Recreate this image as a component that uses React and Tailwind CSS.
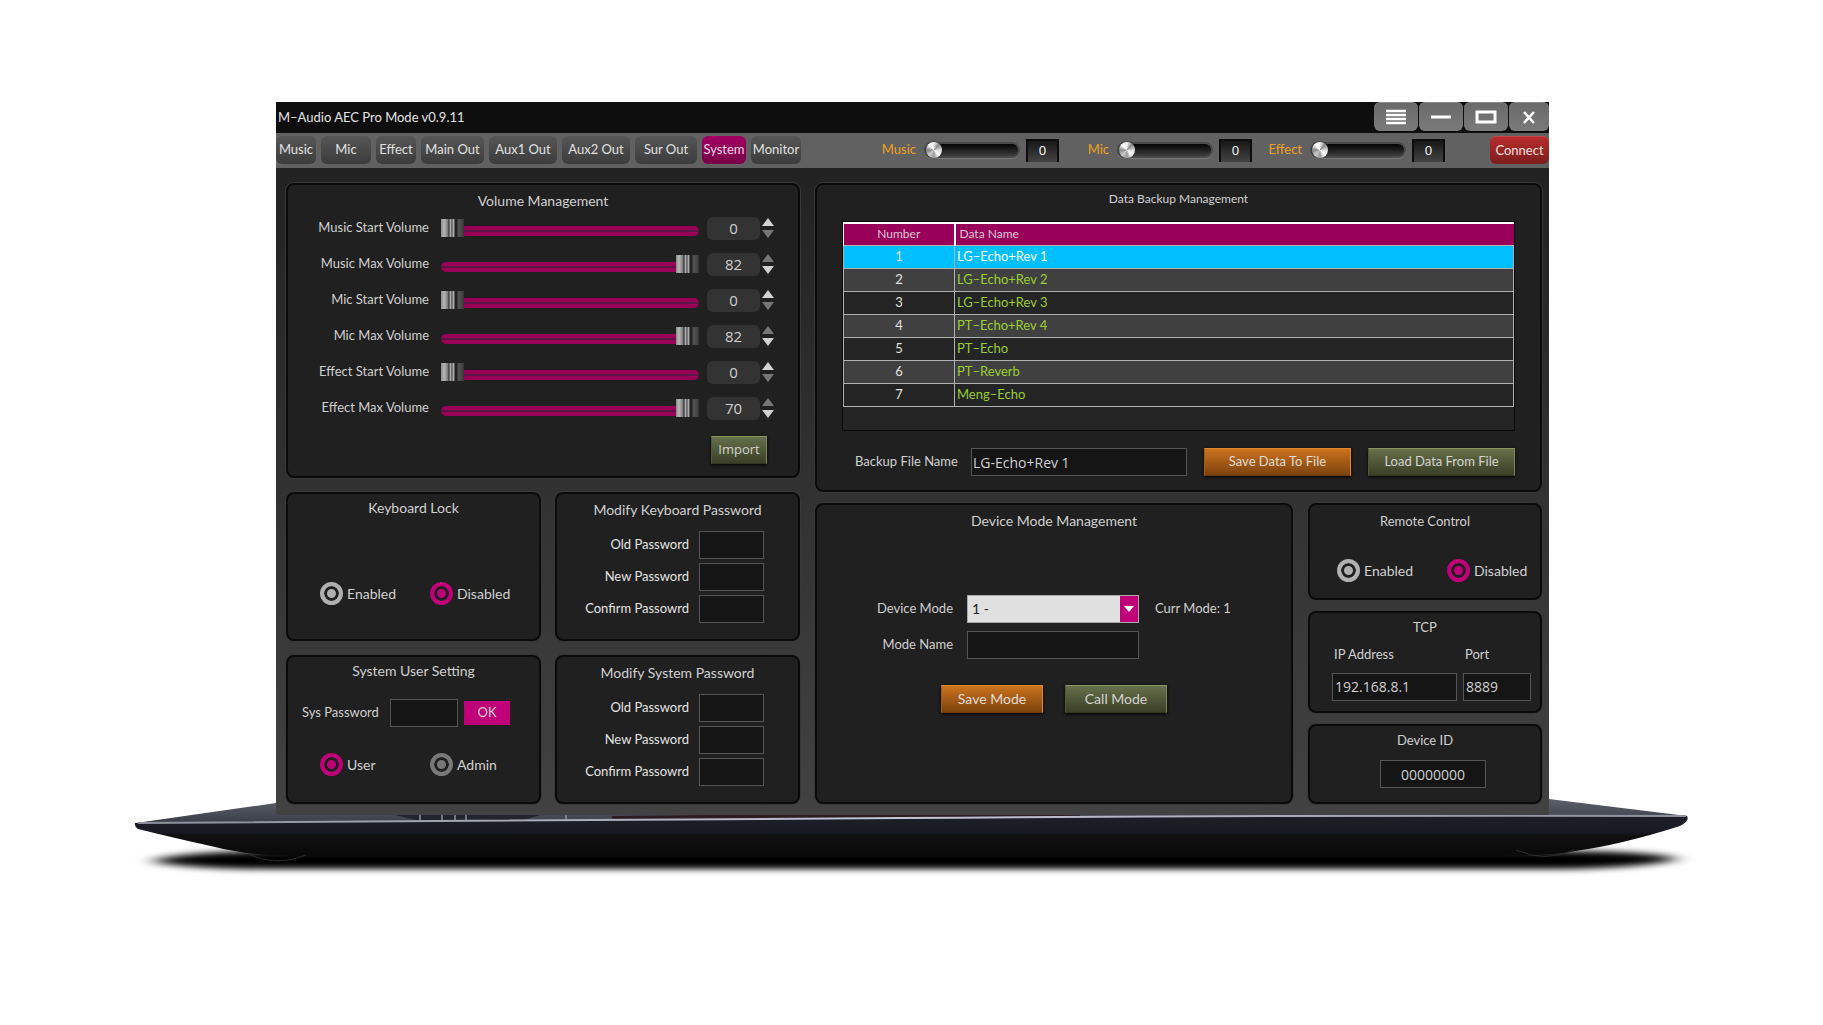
import React from "react";

const panelBase = "rounded-lg border-2 border-[#0a0a0a] bg-[#202020] text-[#d0d0d0] shadow-[0_0_0_1px_#383838]";

function Panel({ title, className = "", titleClass = "text-sm leading-5", children }) {
  return (
    <section className={panelBase + " flex flex-col " + className}>
      <h2 className={"text-center " + titleClass}>{title}</h2>
      {children}
    </section>
  );
}

const tabs = [
  ["Music", "w-10"],
  ["Mic", "w-[50px]"],
  ["Effect", "w-10"],
  ["Main Out", "w-[63px]"],
  ["Aux1 Out", "w-[68px]"],
  ["Aux2 Out", "w-[68px]"],
  ["Sur Out", "w-[62px]"],
  ["System", "w-11"],
  ["Monitor", "w-[50px]"],
];

function TopSlider({ label }) {
  const id = "top-" + label.toLowerCase();
  return (
    <div className="flex w-[193px] items-center">
      <label htmlFor={id} className="flex-1 text-right text-[13px] text-[#f0a020]">
        {label}
      </label>
      <input
        id={id}
        type="range"
        min="0"
        max="82"
        defaultValue="0"
        className="ml-2 h-4 w-24 appearance-none rounded-full border-2 border-[#4a4a4a] bg-linear-to-b from-[#050505] to-[#3e3e3e] shadow-[0_1px_0_#7a7a7a] [&::-webkit-slider-thumb]:size-4 [&::-webkit-slider-thumb]:appearance-none [&::-webkit-slider-thumb]:rounded-full [&::-webkit-slider-thumb]:bg-[conic-gradient(#eee,#888_12%,#ddd_25%,#fff_38%,#999_50%,#ccc_62%,#888_75%,#fff_88%,#eee)] [&::-webkit-slider-thumb]:shadow-[0_0_2px_#222]"
      />
      <output htmlFor={id} className="ml-1.5 flex h-[23px] w-[33px] items-center justify-center border-x-2 border-t-2 border-[#0c0c0c] bg-linear-to-b from-[#181818] to-[#444] font-['Open_Sans',sans-serif] text-[13px] text-white">
        0
      </output>
    </div>
  );
}

function WindowButton({ label, width = "w-11", children }) {
  return (
    <button aria-label={label} className={"flex h-[29px] items-center justify-center rounded-md border-t border-[#8a8a8a] bg-linear-to-b from-[#6a6a6a] to-[#7a7a7a] text-white " + width}>
      <svg viewBox="0 0 22 16" className="h-4 w-[22px]" fill="none" stroke="currentColor">
        {children}
      </svg>
    </button>
  );
}

const volumes = [
  ["Music Start Volume", 0, 82],
  ["Music Max Volume", 82, 82],
  ["Mic Start Volume", 0, 82],
  ["Mic Max Volume", 82, 82],
  ["Effect Start Volume", 0, 70],
  ["Effect Max Volume", 70, 70],
];

function VolumeRow({ label, value, max }) {
  const id = label.toLowerCase().replaceAll(" ", "-");
  const atMin = value === 0;
  return (
    <div className="flex h-9 items-center">
      <label htmlFor={id} className="w-[141px] text-right text-[13px]">
        {label}
      </label>
      <input
        id={id}
        type="range"
        min="0"
        max={max}
        defaultValue={value}
        className="ml-3 h-5 min-w-0 flex-1 appearance-none bg-transparent [&::-webkit-slider-runnable-track]:mt-1.5 [&::-webkit-slider-runnable-track]:h-2.5 [&::-webkit-slider-runnable-track]:rounded-full [&::-webkit-slider-runnable-track]:bg-[linear-gradient(#9b0058_4px,#5c1448_4px,#5c1448_6px,#9b0058_6px)] [&::-webkit-slider-thumb]:mt-[-7px] [&::-webkit-slider-thumb]:h-[18px] [&::-webkit-slider-thumb]:w-[23px] [&::-webkit-slider-thumb]:appearance-none [&::-webkit-slider-thumb]:bg-[linear-gradient(90deg,#8a8a8a,#b8b8b8_3px,#777_7px,#222_8px,#aaa_9px,#aaa_10px,#333_11px,#bbb_12px,#999_13px,#222_14px,#222_16px,#555_17px,#444_21px,#333)]"
      />
      <output htmlFor={id} className="ml-2 flex h-[23px] w-[53px] items-center justify-center rounded-md bg-[#333] font-['Open_Sans',sans-serif] text-[15px]">
        {value}
      </output>
      <div className="mr-6 ml-0.5 flex flex-col gap-1">
        <button aria-label={"Increase " + label} className={atMin ? "text-[#d0d0d0]" : "text-[#777]"}>
          <svg viewBox="0 0 12 8" className="h-2 w-3" fill="currentColor"><path d="M6 0 12 8H0Z" /></svg>
        </button>
        <button aria-label={"Decrease " + label} className={atMin ? "text-[#777]" : "text-[#d0d0d0]"}>
          <svg viewBox="0 0 12 8" className="h-2 w-3" fill="currentColor"><path d="M0 0H12L6 8Z" /></svg>
        </button>
      </div>
    </div>
  );
}

function Radio({ name, label, checked, tone = "border-[#b0b0b0] bg-[#b0b0b0]" }) {
  return (
    <label className="flex items-center gap-1 text-sm">
      <input
        type="radio"
        name={name}
        defaultChecked={checked}
        className={
          "size-[23px] appearance-none rounded-full border-4 shadow-[inset_0_0_0_3px_#202020] " +
          (checked ? "border-[#c00078] bg-[#c00078]" : tone)
        }
      />
      {label}
    </label>
  );
}

const field = "h-7 min-w-0 border border-[#555] bg-[#151515] font-['Open_Sans',sans-serif] text-sm text-[#d0d0d0]";

function PasswordPanel({ title, prefix }) {
  return (
    <Panel title={title} className="h-[149px]" titleClass="mt-1.5 text-sm leading-5">
      <div className="mt-[11px] mr-[34px] flex flex-col gap-1">
        {["Old Password", "New Password", "Confirm Passowrd"].map((label, i) => (
          <div key={label} className="flex items-center justify-end gap-2.5 text-[13px] text-[#e4e4e4]">
            <label htmlFor={prefix + i}>{label}</label>
            <input id={prefix + i} type="password" className={field + " w-[65px]"} />
          </div>
        ))}
      </div>
    </Panel>
  );
}

const orange = "border border-t-[#e08a2c] border-r-[#e08a2c] border-b-[#6b3a08] border-l-[#a85c14] bg-linear-to-b from-[#cd731e] to-[#7c430d] text-[#e0dcd4] shadow-[0_1px_3px_#000]";
const olive = "border border-t-[#8a9660] border-r-[#808a5c] border-b-[#33361f] border-l-[#50583a] bg-linear-to-b from-[#66704a] to-[#3b3f27] text-[#d4d4d0] shadow-[0_1px_3px_#000]";

const backups = ["LG–Echo+Rev 1", "LG–Echo+Rev 2", "LG–Echo+Rev 3", "PT–Echo+Rev 4", "PT–Echo", "PT–Reverb", "Meng–Echo"];

function rowTone(i) {
  if (i === 0) return "bg-[#00bfff] text-white";
  return i % 2 ? "bg-[#404040] text-[#9acd32]" : "bg-[#242424] text-[#9acd32]";
}

function LaptopBase() {
  return (
    <svg viewBox="0 0 1823 80" className="-mt-4 block w-full" aria-hidden="true">
      <defs>
        <linearGradient id="deck" x1="0" y1="0" x2="0" y2="1">
          <stop offset="0" stopColor="#5c606b" />
          <stop offset="1" stopColor="#3a3e48" />
        </linearGradient>
        <linearGradient id="front" x1="0" y1="0" x2="0" y2="1">
          <stop offset="0" stopColor="#1c1f29" />
          <stop offset="0.4" stopColor="#191b24" />
          <stop offset="0.5" stopColor="#101010" />
          <stop offset="1" stopColor="#090909" />
        </linearGradient>
        <linearGradient id="lip" x1="0" y1="0" x2="1" y2="0">
          <stop offset="0" stopColor="#8a8f9b" />
          <stop offset="0.5" stopColor="#c4c4d4" />
          <stop offset="1" stopColor="#8a8f9b" />
        </linearGradient>
        <filter id="soft" x="-5%" y="-100%" width="110%" height="300%">
          <feGaussianBlur stdDeviation="9 3" />
        </filter>
      </defs>
      <path d="M150 62Q180 53 260 52H1570Q1650 52 1680 60Q1640 69 1560 70H270Q190 70 150 62Z" fill="#000" filter="url(#soft)" />
      <path d="M136 24 276 4 1549 0 1687 17 1600 24H160Z" fill="url(#deck)" />
      <path d="M395 16H540L520 22H420Z" fill="#23252e" />
      <path d="M420 16V21M442 16V21M455 16V21M466 16V21M566 16V21" stroke="#8d929e" strokeWidth="1.5" />
      <path d="M612 19Q850 16 1080 16" fill="none" stroke="#2c1c22" strokeWidth="4" />
      <path d="M135 24Q500 21 900 18T1687 17Q1690 22 1680 27Q1620 46 1575 52Q1560 56 1500 57H300Q250 57 215 48Q170 38 138 30Q134 27 135 24Z" fill="url(#front)" />
      <path d="M138 24Q500 22 900 19T1686 17" fill="none" stroke="url(#lip)" strokeWidth="2" />
      <path d="M250 56Q278 68 306 56M1516 51Q1545 64 1574 51" fill="none" stroke="#2c2c2c" />
    </svg>
  );
}

export default function App() {
  return (
    <div className="min-h-screen overflow-hidden bg-white pt-[102px] font-['Lato','Noto_Sans',sans-serif]">
      <div className="relative z-10 pl-0.5">
        <main className="mx-auto w-full max-w-[1273px] bg-[#0e0e0e]">
          <header className="flex h-[31px] items-start justify-between">
            <h1 className="pl-0.5 text-[13px] leading-[30px] text-[#e4e4e4]">M–Audio AEC Pro Mode v0.9.11</h1>
            <div className="flex gap-px">
              <WindowButton label="Menu"><path d="M1 2H21M1 6H21M1 10H21M1 14H21" strokeWidth="2.4" /></WindowButton>
              <WindowButton label="Minimize"><path d="M1 8H21" strokeWidth="3" /></WindowButton>
              <WindowButton label="Maximize"><path d="M2 3H20V13H2Z" strokeWidth="3" /></WindowButton>
              <WindowButton label="Close" width="w-10"><path d="M6 3 16 14M16 3 6 14" strokeWidth="2.6" /></WindowButton>
            </div>
          </header>

          <div className="flex h-[35px] items-center justify-between bg-[#616161] pb-px">
            <nav className="flex gap-[5px]">
              {tabs.map(([label, width]) => (
                <button
                  key={label}
                  className={
                    "h-7 rounded-md text-[13px] whitespace-nowrap " + width +
                    (label === "System"
                      ? " bg-linear-to-b from-[#a30062] to-[#780048] text-[#f0d8e8]"
                      : " bg-linear-to-b from-[#565656] to-[#3c3c3c] text-[#e0e0e0]")
                  }
                >
                  <span className="flex justify-center">{label}</span>
                </button>
              ))}
            </nav>
            <div className="flex items-center">
              <TopSlider label="Music" />
              <TopSlider label="Mic" />
              <TopSlider label="Effect" />
              <button className="ml-[45px] h-7 w-[59px] rounded-md border-t border-[#c84444] bg-linear-to-b from-[#b82c2c] to-[#7c1c1c] text-[13px] text-[#f0e0e0]">
                Connect
              </button>
            </div>
          </div>

          <div className="flex gap-[15px] bg-linear-to-b from-[#222] to-[#424242] pt-[15px] pr-[7px] pb-[11px] pl-2.5">
            <div className="flex w-[514px] flex-col gap-3.5">
              <Panel title="Volume Management" className="h-[295px]" titleClass="mt-2 text-sm leading-4">
                <div className="mt-px flex flex-col">
                  {volumes.map(([label, value, max]) => (
                    <VolumeRow key={label} label={label} value={value} max={max} />
                  ))}
                </div>
                <button className={olive + " mt-2.5 mr-[31px] h-7 w-14 self-end font-['Open_Sans',sans-serif] text-[13px]"}>Import</button>
              </Panel>
              <div className="grid grid-cols-[255fr_245fr] gap-3.5">
                <Panel title="Keyboard Lock" className="h-[149px]" titleClass="mt-1 text-sm leading-5">
                  <div className="mt-16 grid grid-cols-[110px_1fr] pl-8">
                    <Radio name="lock" label="Enabled" />
                    <Radio name="lock" label="Disabled" checked />
                  </div>
                </Panel>
                <PasswordPanel title="Modify Keyboard Password" prefix="keyboard-password-" />
                <Panel title="System User Setting" className="h-[149px]" titleClass="mt-1 text-sm leading-5">
                  <div className="mt-[18px] flex items-center pl-3.5 text-[13px]">
                    <label htmlFor="sys-password" className="w-20">Sys Password</label>
                    <input id="sys-password" type="password" className={field + " ml-2 w-[68px]"} />
                    <button className="ml-1.5 h-6 w-[46px] bg-[#c00078]">OK</button>
                  </div>
                  <div className="mt-[26px] grid grid-cols-[110px_1fr] pl-8">
                    <Radio name="user" label="User" checked />
                    <Radio name="user" label="Admin" tone="border-[#787878] bg-[#787878]" />
                  </div>
                </Panel>
                <PasswordPanel title="Modify System Password" prefix="system-password-" />
              </div>
            </div>

            <div className="flex min-w-0 flex-1 flex-col gap-[11px]">
              <Panel title="Data Backup Management" className="h-[309px]" titleClass="mt-1 text-xs leading-5">
                <div className="mx-[25px] mt-3 h-[210px] border border-[#0a0a0a] bg-[#242424]">
                  <table className="w-full table-fixed border-collapse text-[13px]">
                    <thead>
                      <tr className="h-[22px] border-t-2 border-l border-white bg-[#98005a] text-xs text-[#dcc8d4]">
                        <th scope="col" className="w-[111px] border-r-2 border-white p-0 font-normal">Number</th>
                        <th scope="col" className="p-0 pl-1 text-left font-normal">Data Name</th>
                      </tr>
                    </thead>
                    <tbody>
                      {backups.map((name, i) => (
                        <tr key={name} className={"h-[23px] border border-[#b0b0b0] " + rowTone(i)}>
                          <td className="border-r border-[#b0b0b0] p-0 text-center text-[#e0e0e0]">{i + 1}</td>
                          <td className="p-0 pl-0.5">{name}</td>
                        </tr>
                      ))}
                    </tbody>
                  </table>
                </div>
                <div className="mt-[17px] flex items-center pr-[25px] pl-[38px] text-[13px]">
                  <label htmlFor="backup-file" className="w-[106px]">Backup File Name</label>
                  <input id="backup-file" defaultValue="LG-Echo+Rev 1" className={field + " ml-2.5 flex-1 pl-px"} />
                  <button className={orange + " ml-[17px] h-7 w-[147px]"}>Save Data To File</button>
                  <button className={olive + " ml-[17px] h-7 w-[147px]"}>Load Data From File</button>
                </div>
              </Panel>

              <div className="grid flex-1 grid-cols-[478fr_234fr] gap-[15px]">
                <Panel title="Device Mode Management" titleClass="mt-1.5 text-sm leading-5">
                  <div className="mt-16 grid grid-cols-[150px_172px_1fr] items-center gap-y-2 text-[13px]">
                    <label htmlFor="device-mode" className="pr-3.5 text-right">Device Mode</label>
                    <div className="relative">
                      <select id="device-mode" className="h-7 w-full appearance-none border border-[#aaa] bg-[#e0e0e0] pl-1 text-sm text-[#222]">
                        <option>1 -</option>
                      </select>
                      <span className="pointer-events-none absolute inset-y-px right-px flex w-[18px] items-center justify-center bg-[#c00078]">
                        <svg viewBox="0 0 10 6" className="h-1.5 w-2.5" fill="#fff"><path d="M0 0H10L5 6Z" /></svg>
                      </span>
                    </div>
                    <span className="pl-4">Curr Mode: 1</span>
                    <label htmlFor="mode-name" className="pr-3.5 text-right">Mode Name</label>
                    <input id="mode-name" className={field} />
                  </div>
                  <div className="mt-[26px] flex justify-center gap-[22px] text-sm">
                    <button className={orange + " h-7 w-[102px]"}>Save Mode</button>
                    <button className={olive + " h-7 w-[102px]"}>Call Mode</button>
                  </div>
                </Panel>

                <div className="flex flex-col gap-[11px]">
                  <Panel title="Remote Control" className="h-[97px]" titleClass="mt-1.5 text-[13px] leading-5">
                    <div className="mt-7 grid grid-cols-[110px_1fr] pl-[27px]">
                      <Radio name="remote" label="Enabled" />
                      <Radio name="remote" label="Disabled" checked />
                    </div>
                  </Panel>
                  <Panel title="TCP" className="h-[102px]" titleClass="mt-1 text-[13px] leading-5">
                    <div className="mt-2 grid grid-cols-[125px_68px] gap-x-1.5 gap-y-2 pl-[22px] text-[13px]">
                      <label htmlFor="ip" className="pl-0.5">IP Address</label>
                      <label htmlFor="port" className="pl-0.5">Port</label>
                      <input id="ip" defaultValue="192.168.8.1" className={field + " pl-0.5"} />
                      <input id="port" defaultValue="8889" className={field + " pl-0.5"} />
                    </div>
                  </Panel>
                  <Panel title="Device ID" className="h-20" titleClass="mt-1 text-[13px] leading-5">
                    <input aria-label="Device ID" defaultValue="00000000" className={field + " mt-2.5 ml-4 w-[106px] self-center text-center"} />
                  </Panel>
                </div>
              </div>
            </div>
          </div>
        </main>
      </div>
      <LaptopBase />
    </div>
  );
}
